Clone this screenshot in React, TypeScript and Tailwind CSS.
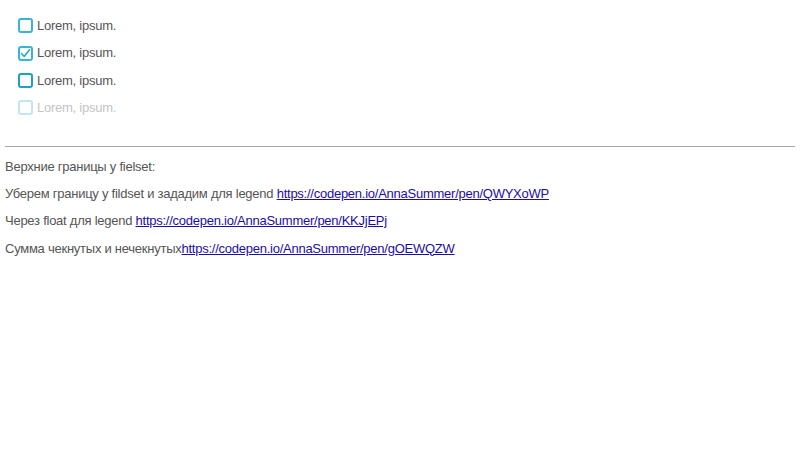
import React from "react";

function Box({ checked, variant }: { checked?: boolean; variant: "normal" | "focus" | "disabled" }) {
  const border =
    variant === "disabled" ? "border-[#bfe6f1]" : variant === "focus" ? "border-[#1f9fc6]" : "border-[#3ab4d6]";
  return (
    <span className={`relative inline-block w-[15px] h-[15px] rounded-[3px] border-2 ${border} bg-white shrink-0`}>
      {checked && (
        <svg className="absolute left-[0px] top-[0px]" width="11" height="11" viewBox="0 0 11 11">
          <polyline points="1.5,5.5 4.2,8.5 9.5,1.8" fill="none" stroke="#2aa6cf" strokeWidth="1.6" strokeLinecap="round" strokeLinejoin="round" />
        </svg>
      )}
    </span>
  );
}

export default function App() {
  const rows: { checked?: boolean; variant: "normal" | "focus" | "disabled" }[] = [
    { variant: "normal" },
    { checked: true, variant: "normal" },
    { variant: "focus" },
    { variant: "disabled" },
  ];
  return (
    <div className="w-[800px] h-[450px] bg-white px-[5px] font-['Liberation_Sans',Arial,sans-serif] text-[13px] tracking-[-0.25px] text-[#555]">
      <div className="pt-[12px] pl-[13px]">
        {rows.map((r, i) => (
          <div key={i} className="flex items-center gap-[4px] h-[27.4px]">
            <Box checked={r.checked} variant={r.variant} />
            <span className={r.variant === "disabled" ? "text-[#c4c4c4]" : "text-[#555]"}>Lorem, ipsum.</span>
          </div>
        ))}
      </div>
      <div className="mt-[24.4px] h-px bg-[#a9a9a9]" />
      <div className="pt-[6px] leading-[27.2px]">
        <p>Верхние границы у fielset:</p>
        <p>
          Уберем границу у fildset и зададим для legend{" "}
          <a className="text-[#1a0dab] underline" href="#">https://codepen.io/AnnaSummer/pen/QWYXoWP</a>
        </p>
        <p>
          Через float для legend{" "}
          <a className="text-[#1a0dab] underline" href="#">https://codepen.io/AnnaSummer/pen/KKJjEPj</a>
        </p>
        <p>
          Сумма чекнутых и нечекнутых
          <a className="text-[#1a0dab] underline" href="#">https://codepen.io/AnnaSummer/pen/gOEWQZW</a>
        </p>
      </div>
    </div>
  );
}
